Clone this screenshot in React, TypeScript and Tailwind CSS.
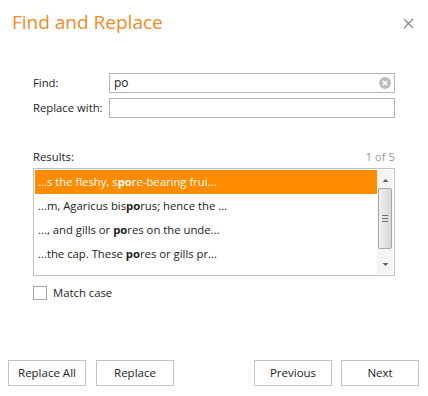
const results = [
  { pre: "...s the fleshy, s", hit: "po", post: "re-bearing frui..." },
  { pre: "...m, Agaricus bis", hit: "po", post: "rus; hence the ..." },
  { pre: "..., and gills or ", hit: "po", post: "res on the unde..." },
  { pre: "...the cap. These ", hit: "po", post: "res or gills pr..." },
  { pre: "...ospores, microscopic spores that help t", hit: "", post: "" },
];

function Button({ label, className = "" }: { label: string; className?: string }) {
  return (
    <button className={`h-[26px] w-[78px] border border-[#c4c4c4] bg-white text-[11.5px] text-[#222] ${className}`}>
      {label}
    </button>
  );
}

function Scrollbar() {
  return (
    <div className="flex w-[16px] flex-col items-center bg-[#f4f4f4] py-[2px]">
      <svg width="7" height="14" viewBox="0 0 7 14" className="mt-[1px]">
        <path d="M0.5 9 L3.5 6 L6.5 9 Z" fill="#606060" />
      </svg>
      <div className="mt-[1px] flex h-[61px] w-[14px] flex-col items-center justify-center gap-[2px] rounded-[2px] border border-[#a8a8a8] bg-gradient-to-r from-[#f0f0f0] via-[#e4e4e4] to-[#d4d4d4]">
        <div className="h-px w-[6px] bg-[#707070]" />
        <div className="h-px w-[6px] bg-[#707070]" />
        <div className="h-px w-[6px] bg-[#707070]" />
      </div>
      <div className="flex-1" />
      <svg width="7" height="14" viewBox="0 0 7 14" className="mb-[1px]">
        <path d="M0.5 6 L3.5 9 L6.5 6 Z" fill="#606060" />
      </svg>
    </div>
  );
}

export default function App() {
  return (
    <div
      className="flex h-[396px] w-[428px] flex-col bg-white text-[11.3px] text-[#222]"
      style={{ fontFamily: '"Open Sans", "Noto Sans", sans-serif' }}
    >
      <div className="flex items-start justify-between pl-[12px] pr-[12px] pt-[8px]">
        <h1 className="text-[19px] font-normal leading-[28px] text-[#f08a24]">Find and Replace</h1>
        <svg width="11" height="11" viewBox="0 0 11 11" className="mt-[10px] mr-[2px]">
          <path d="M1 1 L10 10 M10 1 L1 10" stroke="#8a8a8a" strokeWidth="1.3" />
        </svg>
      </div>

      <div className="flex flex-col pl-[33px] pr-[33px] pt-[37px]">
        <div className="flex items-center">
          <span className="w-[76px]">Find:</span>
          <div className="flex h-[20px] flex-1 items-center border border-[#b5b5b5] pl-[4px] pr-[3px]">
            <span className="flex-1 text-[12px]">po</span>
            <svg width="12" height="12" viewBox="0 0 12 12">
              <circle cx="6" cy="6" r="6" fill="#bdbdbd" />
              <path d="M3.8 3.8 L8.2 8.2 M8.2 3.8 L3.8 8.2" stroke="white" strokeWidth="1.6" />
            </svg>
          </div>
        </div>
        <div className="mt-[5px] flex items-center">
          <span className="w-[76px] whitespace-nowrap">Replace with:</span>
          <div className="h-[20px] flex-1 border border-[#b5b5b5]" />
        </div>

        <div className="mt-[30px] flex items-center justify-between leading-[18px]">
          <span>Results:</span>
          <span className="text-[#9a9a9a]">1 of 5</span>
        </div>
        <div className="mt-[2px] flex h-[108px] border border-[#c2c2c2] p-[1px]">
          <div className="min-w-0 flex-1 overflow-hidden">
            {results.map((r, i) => (
              <div
                key={i}
                className={`h-[24px] whitespace-pre pl-[3px] leading-[24px] ${
                  i === 0 ? "bg-[#ff8c00] text-white" : "text-[#222]"
                }`}
              >
                {r.pre}
                <b>{r.hit}</b>
                {r.post}
              </div>
            ))}
          </div>
          <Scrollbar />
        </div>

        <label className="mt-[9px] flex items-center gap-[6px]">
          <span className="h-[14px] w-[14px] border border-[#a6a6a6] bg-white" />
          <span>Match case</span>
        </label>
      </div>

      <div className="mt-auto flex items-center pb-[10px] pl-[8px] pr-[9px]">
        <Button label="Replace All" />
        <Button label="Replace" className="ml-[10px]" />
        <div className="flex-1" />
        <Button label="Previous" />
        <Button label="Next" className="ml-[9px]" />
      </div>
    </div>
  );
}
